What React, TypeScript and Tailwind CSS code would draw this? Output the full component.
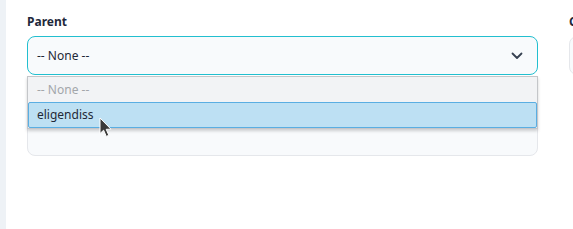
import React from "react";

export default function App() {
  return (
    <div
      className="flex h-[229px] w-[573px] overflow-hidden bg-white"
      style={{ fontFamily: '"Noto Sans", "Open Sans", sans-serif' }}
    >
      <div className="w-[6px] shrink-0 bg-[#eef2f6]" />
      <div className="flex flex-1 gap-[31px] pl-[21px] pt-[14px]">
        <div className="relative w-[511px] shrink-0">
          <div className="h-[16px] text-[12px] font-bold leading-[16px] text-[#1e293b]">Parent</div>
          <div className="mt-[6px] flex h-[39px] items-center justify-between rounded-[8px] border border-[#22bfcf] bg-[#f8fafc] pl-[9px] pr-[14px]">
            <span className="text-[12px] text-[#1f2937]">-- None --</span>
            <svg width="12" height="8" viewBox="0 0 12 8" fill="none">
              <path d="M1.5 1.5 L6 6 L10.5 1.5" stroke="#374151" strokeWidth="1.8" strokeLinecap="round" strokeLinejoin="round" />
            </svg>
          </div>
          <div className="mt-[6px] h-[75px] rounded-[8px] border border-[#e5e7eb] bg-[#f8fafc]" />

          <div className="absolute left-0 top-[62px] w-[511px] border border-[#c4c6c9] bg-[#f2f3f5] shadow-[0_2px_3px_rgba(0,0,0,0.18)]">
            <div className="flex h-[25px] items-center pl-[9px] text-[12px] text-[#a3a6aa]">-- None --</div>
            <div className="flex h-[26px] items-center rounded-[2px] border border-[#5aaee2] bg-[#bde0f3] pl-[8px] text-[12px] text-[#1f2937]">
              eligendiss
            </div>
          </div>

          <svg className="absolute left-[72px] top-[103px]" width="14" height="21" viewBox="0 0 14 21">
            <path d="M1 1 L1 16.5 L4.6 13.2 L7.3 19.4 L9.8 18.3 L7.2 12.3 L12 12.2 Z" fill="#3a3a3a" stroke="#ffffff" strokeWidth="1" strokeLinejoin="round" />
          </svg>
        </div>
        <div className="w-[200px] shrink-0">
          <div className="h-[16px] text-[12px] font-bold leading-[16px] text-[#1e293b]">Category</div>
          <div className="mt-[6px] h-[39px] rounded-[8px] border border-[#e5e7eb] bg-[#f8fafc]" />
        </div>
      </div>
    </div>
  );
}
